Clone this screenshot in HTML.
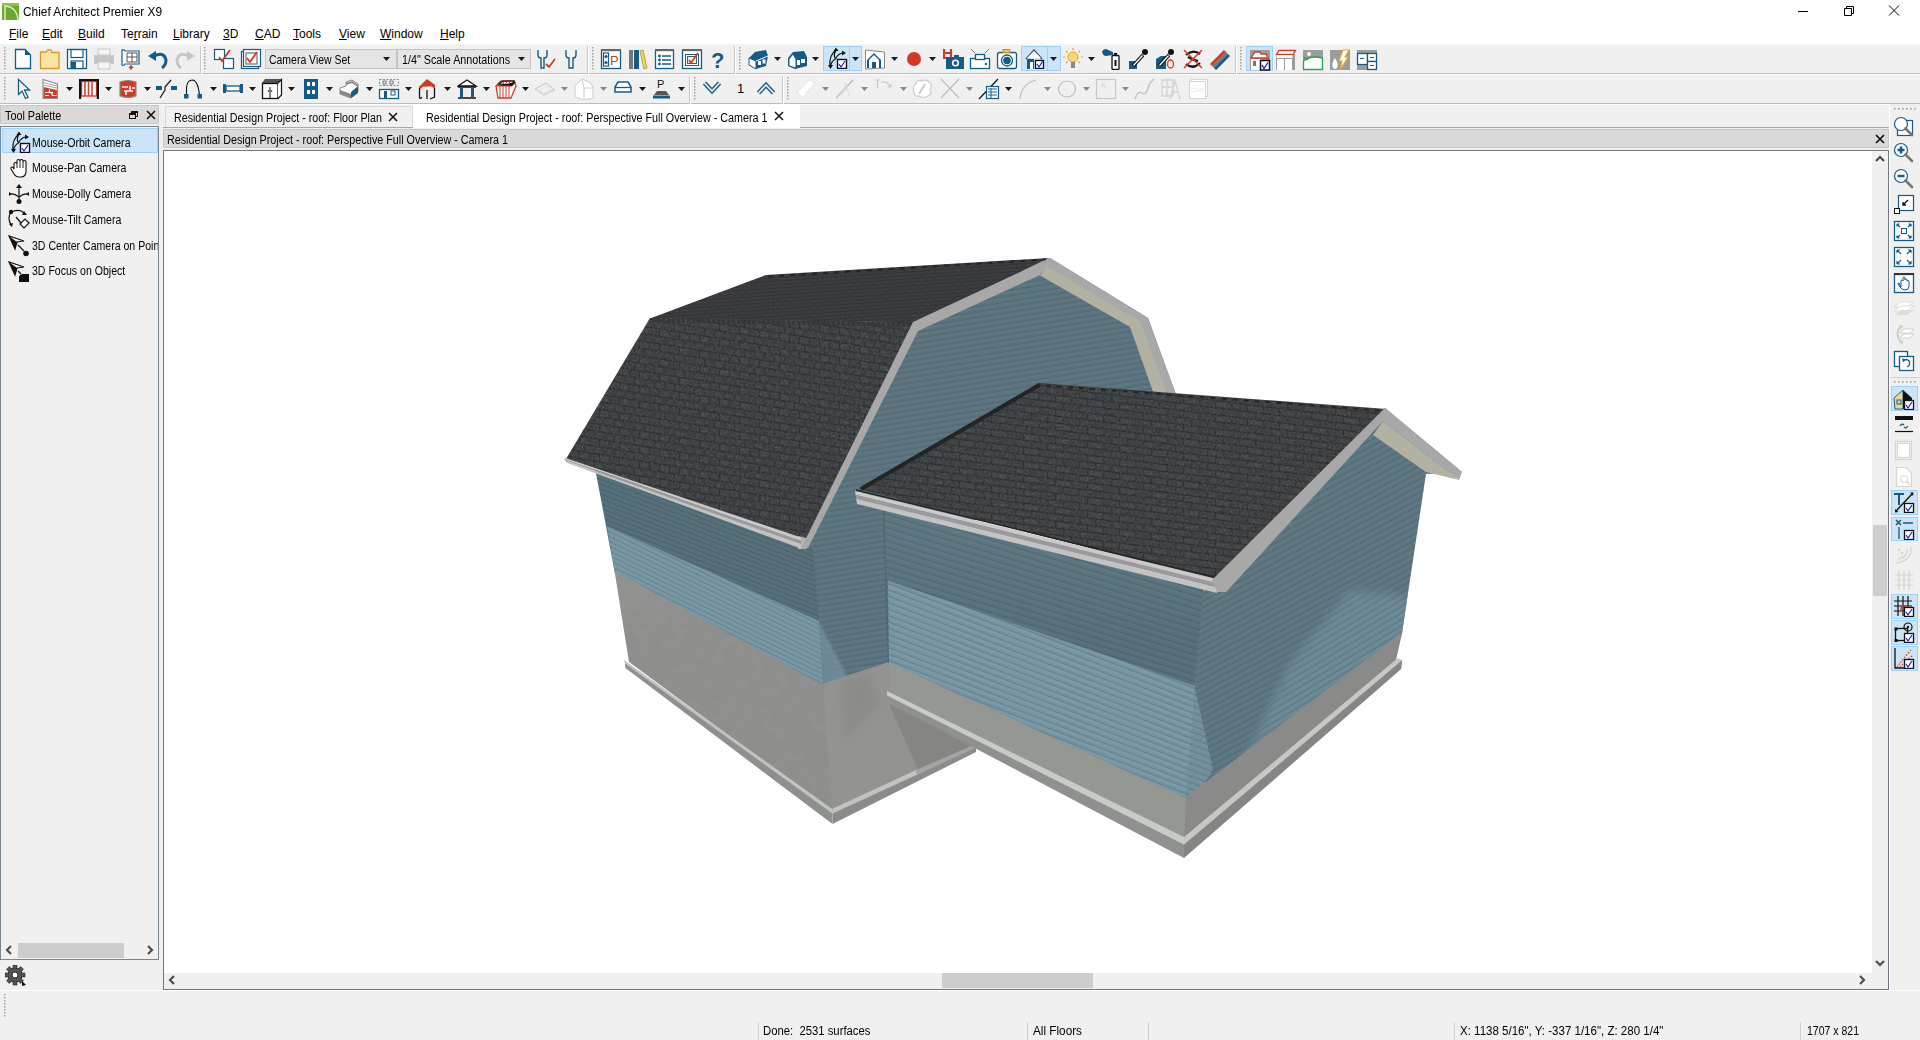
<!DOCTYPE html><html><head><meta charset="utf-8"><style>
html,body{margin:0;padding:0;width:1920px;height:1040px;overflow:hidden;background:#f0f0f0;font-family:"Liberation Sans", sans-serif;}
.r{position:absolute;display:block;}
.t{position:absolute;white-space:nowrap;line-height:1;font-family:"Liberation Sans", sans-serif;}
u{text-decoration:underline;text-underline-offset:1px;}
</style></head><body>

<div class="r" style="left:0px;top:0px;width:1920px;height:44px;background:#ffffff;"></div>
<svg class="r" style="left:2px;top:3px;" width="17" height="17" viewBox="0 0 17 17"><rect width="17" height="17" fill="#6aa82e"/><rect x="0" y="0" width="17" height="3" fill="#8cc44a"/><path d="M3 17 V3 Q15 4 16 17" fill="none" stroke="#d9efc0" stroke-width="1.5"/></svg>
<div class="t" style="left:23px;top:6px;font-size:12px;color:#000;transform:scaleX(0.9879);transform-origin:0 0;">Chief Architect Premier X9</div>
<svg class="r" style="left:1796px;top:4px" width="16" height="14"><path d="M2 7.5 H12" stroke="#000" stroke-width="1"/></svg>
<svg class="r" style="left:1842px;top:4px" width="16" height="14"><path d="M2.5 4.5 h7 v7 h-7 z M4.5 4.5 v-2 h7 v7 h-2" fill="none" stroke="#000" stroke-width="1"/></svg>
<svg class="r" style="left:1887px;top:4px" width="16" height="14"><path d="M2 1.5 L12 11.5 M12 1.5 L2 11.5" stroke="#000" stroke-width="1"/></svg>
<div class="t" style="left:9px;top:28.3px;font-size:12px;color:#000;"><u>F</u>ile</div>
<div class="t" style="left:42px;top:28.3px;font-size:12px;color:#000;"><u>E</u>dit</div>
<div class="t" style="left:78px;top:28.3px;font-size:12px;color:#000;"><u>B</u>uild</div>
<div class="t" style="left:121px;top:28.3px;font-size:12px;color:#000;">Te<u>r</u>rain</div>
<div class="t" style="left:173px;top:28.3px;font-size:12px;color:#000;"><u>L</u>ibrary</div>
<div class="t" style="left:223px;top:28.3px;font-size:12px;color:#000;"><u>3</u>D</div>
<div class="t" style="left:255px;top:28.3px;font-size:12px;color:#000;"><u>C</u>AD</div>
<div class="t" style="left:293px;top:28.3px;font-size:12px;color:#000;"><u>T</u>ools</div>
<div class="t" style="left:339px;top:28.3px;font-size:12px;color:#000;"><u>V</u>iew</div>
<div class="t" style="left:380px;top:28.3px;font-size:12px;color:#000;"><u>W</u>indow</div>
<div class="t" style="left:440px;top:28.3px;font-size:12px;color:#000;"><u>H</u>elp</div>
<div class="r" style="left:0px;top:44px;width:1920px;height:1px;background:#f7f7f7;"></div>
<div class="r" style="left:0px;top:73px;width:1920px;height:1px;background:#bdbdbd;"></div>
<div class="r" style="left:0px;top:74px;width:1920px;height:1px;background:#ffffff;"></div>
<div class="r" style="left:0px;top:103px;width:1920px;height:1px;background:#bdbdbd;"></div>
<div class="r" style="left:0px;top:104px;width:1920px;height:1px;background:#ffffff;"></div>
<svg class="r" style="left:4px;top:47px;" width="3" height="24" viewBox="0 0 3 24"><rect x="0" y="0" width="1.5" height="1.5" fill="#a0a0a0"/><rect x="0" y="3" width="1.5" height="1.5" fill="#a0a0a0"/><rect x="0" y="6" width="1.5" height="1.5" fill="#a0a0a0"/><rect x="0" y="9" width="1.5" height="1.5" fill="#a0a0a0"/><rect x="0" y="12" width="1.5" height="1.5" fill="#a0a0a0"/><rect x="0" y="15" width="1.5" height="1.5" fill="#a0a0a0"/><rect x="0" y="18" width="1.5" height="1.5" fill="#a0a0a0"/><rect x="0" y="21" width="1.5" height="1.5" fill="#a0a0a0"/></svg>
<svg class="r" style="left:14px;top:48px;" width="22" height="22" viewBox="0 0 22 22"><path d="M1.5 1.5 H11 L16.5 7 V20.5 H1.5 Z" fill="#fff" stroke="#145c88" stroke-width="1.3"/><path d="M11 1 L17 7 H11 Z" fill="#145c88"/></svg>
<svg class="r" style="left:39px;top:48px;" width="22" height="22" viewBox="0 0 22 22"><path d="M1.5 4 H7 L9 2 H12 L13 4.5 H20 V20.5 H1.5 Z" fill="#fbe3a2" stroke="#d39b2c" stroke-width="1.3"/></svg>
<svg class="r" style="left:66px;top:48px;" width="22" height="22" viewBox="0 0 22 22"><rect x="1.5" y="1.5" width="19" height="19" fill="#fff" stroke="#145c88" stroke-width="1.3"/><rect x="5" y="1.5" width="12" height="8" fill="none" stroke="#145c88" stroke-width="1.2"/><rect x="5" y="13" width="12" height="7.5" fill="#fff" stroke="#145c88" stroke-width="1.2"/><rect x="5" y="14" width="5" height="6.5" fill="#145c88"/></svg>
<svg class="r" style="left:93px;top:48px;" width="22" height="22" viewBox="0 0 22 22"><rect x="5" y="1" width="12" height="6" fill="#f4f4f4" stroke="#c6c6c6"/><rect x="1" y="7" width="20" height="9" fill="#c6c6c6"/><rect x="5" y="14" width="12" height="7" fill="#f4f4f4" stroke="#c6c6c6"/></svg>
<svg class="r" style="left:120px;top:48px;" width="22" height="22" viewBox="0 0 22 22"><path d="M2 2 Q4 1 5 3 H19 V16 H5 Q4 18 2 17 Z" fill="#fff" stroke="#145c88" stroke-width="1.2"/><path d="M7 5 H17 V14 H7 Z M7 9 H17 M12 5 V14" fill="none" stroke="#555" stroke-width="1"/><path d="M11 22 V18 M9 20 L11 18 L13 20" stroke="#d23a26" stroke-width="1.4" fill="none"/></svg>
<svg class="r" style="left:147px;top:48px;" width="22" height="22" viewBox="0 0 22 22"><path d="M7 8 Q17 3 19 12 Q19 17 15 20" fill="none" stroke="#145c88" stroke-width="3"/><path d="M1 8 L9 3 L9 13 Z" fill="#145c88"/></svg>
<svg class="r" style="left:174px;top:48px;" width="22" height="22" viewBox="0 0 22 22"><path d="M15 8 Q5 3 3 12 Q3 17 7 20" fill="none" stroke="#c6c6c6" stroke-width="3"/><path d="M21 8 L13 3 L13 13 Z" fill="#c6c6c6"/></svg>
<div class="r" style="left:200px;top:46px;width:1px;height:28px;background:#c8c8c8;"></div>
<div class="r" style="left:201px;top:46px;width:1px;height:28px;background:#ffffff;"></div>
<svg class="r" style="left:204px;top:47px;" width="3" height="24" viewBox="0 0 3 24"><rect x="0" y="0" width="1.5" height="1.5" fill="#a0a0a0"/><rect x="0" y="3" width="1.5" height="1.5" fill="#a0a0a0"/><rect x="0" y="6" width="1.5" height="1.5" fill="#a0a0a0"/><rect x="0" y="9" width="1.5" height="1.5" fill="#a0a0a0"/><rect x="0" y="12" width="1.5" height="1.5" fill="#a0a0a0"/><rect x="0" y="15" width="1.5" height="1.5" fill="#a0a0a0"/><rect x="0" y="18" width="1.5" height="1.5" fill="#a0a0a0"/><rect x="0" y="21" width="1.5" height="1.5" fill="#a0a0a0"/></svg>
<svg class="r" style="left:213px;top:48px;" width="22" height="22" viewBox="0 0 22 22"><rect x="1.5" y="1.5" width="10" height="10" fill="#fff" stroke="#145c88" stroke-width="1.2"/><rect x="10.5" y="10.5" width="10" height="10" fill="#fff" stroke="#145c88" stroke-width="1.2"/><path d="M6 9 L9 13 L17 2" fill="none" stroke="#d23a26" stroke-width="1.8"/></svg>
<svg class="r" style="left:240px;top:48px;" width="22" height="22" viewBox="0 0 22 22"><rect x="1.5" y="3.5" width="17" height="17" fill="#fff" stroke="#145c88" stroke-width="1.2"/><rect x="3.5" y="1.5" width="17" height="17" fill="#fff" stroke="#145c88" stroke-width="1.2"/><rect x="6" y="5" width="11" height="11" fill="#fff" stroke="#555"/><path d="M7 10 L10 14 L17 4" fill="none" stroke="#d23a26" stroke-width="1.8"/></svg>
<div class="r" style="left:265px;top:49px;width:132px;height:20px;background:#e5e5e5;box-sizing:border-box;border:1px solid #c4c4c4;"></div>
<div class="t" style="left:268.5px;top:54px;font-size:12px;color:#000;transform:scaleX(0.8718);transform-origin:0 0;">Camera View Set</div>
<svg class="r" style="left:383px;top:57px;" width="8" height="5" viewBox="0 0 8 5"><path d="M0 0 H7 L3.5 4 Z" fill="#1a1a1a"/></svg>
<div class="r" style="left:397px;top:49px;width:134px;height:20px;background:#e5e5e5;box-sizing:border-box;border:1px solid #c4c4c4;"></div>
<div class="t" style="left:401.5px;top:54px;font-size:12px;color:#000;transform:scaleX(0.8977);transform-origin:0 0;">1/4" Scale Annotations</div>
<svg class="r" style="left:518px;top:57px;" width="8" height="5" viewBox="0 0 8 5"><path d="M0 0 H7 L3.5 4 Z" fill="#1a1a1a"/></svg>
<svg class="r" style="left:534px;top:48px;" width="22" height="22" viewBox="0 0 22 22"><path d="M4 2 V7 Q4 10 7 10 V20 H10 V10 Q13 10 13 7 V2" fill="none" stroke="#145c88" stroke-width="1.4"/><path d="M12 16 L15 19 L21 11" fill="none" stroke="#d23a26" stroke-width="1.8"/></svg>
<svg class="r" style="left:563px;top:48px;" width="22" height="22" viewBox="0 0 22 22"><path d="M3 2 V7 Q3 10 6 10 V20 H10 V10 Q13 10 13 7 V2" fill="none" stroke="#145c88" stroke-width="1.4"/></svg>
<div class="r" style="left:587px;top:46px;width:1px;height:28px;background:#c8c8c8;"></div>
<div class="r" style="left:588px;top:46px;width:1px;height:28px;background:#ffffff;"></div>
<svg class="r" style="left:592px;top:47px;" width="3" height="24" viewBox="0 0 3 24"><rect x="0" y="0" width="1.5" height="1.5" fill="#a0a0a0"/><rect x="0" y="3" width="1.5" height="1.5" fill="#a0a0a0"/><rect x="0" y="6" width="1.5" height="1.5" fill="#a0a0a0"/><rect x="0" y="9" width="1.5" height="1.5" fill="#a0a0a0"/><rect x="0" y="12" width="1.5" height="1.5" fill="#a0a0a0"/><rect x="0" y="15" width="1.5" height="1.5" fill="#a0a0a0"/><rect x="0" y="18" width="1.5" height="1.5" fill="#a0a0a0"/><rect x="0" y="21" width="1.5" height="1.5" fill="#a0a0a0"/></svg>
<svg class="r" style="left:600px;top:48px;" width="22" height="22" viewBox="0 0 22 22"><rect x="1.5" y="2.5" width="19" height="18" fill="#fff" stroke="#145c88" stroke-width="1.3"/><rect x="1" y="1" width="20" height="2" fill="#666"/><rect x="3.5" y="5" width="5" height="13" fill="none" stroke="#145c88" stroke-width="1.2"/><circle cx="6" cy="8.5" r="1.6" fill="#145c88"/><circle cx="6" cy="14.5" r="1.6" fill="#145c88"/><text x="10" y="17" font-size="13" font-family="Liberation Sans" fill="#d23a26">P</text></svg>
<svg class="r" style="left:627px;top:48px;" width="22" height="22" viewBox="0 0 22 22"><rect x="2" y="2" width="4" height="19" fill="#777"/><rect x="7" y="2" width="5" height="19" fill="#145c88"/><path d="M13 3 L16 2 L20 20 L17 21 Z" fill="#f0d070" stroke="#c8a030"/></svg>
<svg class="r" style="left:654px;top:48px;" width="22" height="22" viewBox="0 0 22 22"><rect x="1.5" y="2.5" width="18" height="18" fill="#fff" stroke="#145c88" stroke-width="1.3"/><rect x="1" y="1" width="19" height="2" fill="#666"/><circle cx="5.5" cy="8" r="1.4" fill="#145c88"/><circle cx="5.5" cy="12" r="1.4" fill="#145c88"/><circle cx="5.5" cy="16" r="1.4" fill="#145c88"/><path d="M8 8 H17 M8 12 H17 M8 16 H17" stroke="#145c88" stroke-width="1.3"/></svg>
<svg class="r" style="left:681px;top:48px;" width="22" height="22" viewBox="0 0 22 22"><rect x="1.5" y="2.5" width="19" height="18" fill="#fff" stroke="#145c88" stroke-width="1.3"/><rect x="1" y="1" width="20" height="2" fill="#666"/><rect x="4.5" y="6.5" width="13" height="11" fill="none" stroke="#145c88"/><rect x="6.5" y="8.5" width="9" height="7" fill="#eee" stroke="#555"/><path d="M8 12 L10 15 L17 5" fill="none" stroke="#d23a26" stroke-width="1.7"/></svg>
<svg class="r" style="left:709px;top:48px;" width="22" height="22" viewBox="0 0 22 22"><text x="2" y="20" font-size="22" font-weight="bold" font-family="Liberation Sans" fill="#145c88">?</text></svg>
<div class="r" style="left:734px;top:46px;width:1px;height:28px;background:#c8c8c8;"></div>
<div class="r" style="left:735px;top:46px;width:1px;height:28px;background:#ffffff;"></div>
<svg class="r" style="left:739px;top:47px;" width="3" height="24" viewBox="0 0 3 24"><rect x="0" y="0" width="1.5" height="1.5" fill="#a0a0a0"/><rect x="0" y="3" width="1.5" height="1.5" fill="#a0a0a0"/><rect x="0" y="6" width="1.5" height="1.5" fill="#a0a0a0"/><rect x="0" y="9" width="1.5" height="1.5" fill="#a0a0a0"/><rect x="0" y="12" width="1.5" height="1.5" fill="#a0a0a0"/><rect x="0" y="15" width="1.5" height="1.5" fill="#a0a0a0"/><rect x="0" y="18" width="1.5" height="1.5" fill="#a0a0a0"/><rect x="0" y="21" width="1.5" height="1.5" fill="#a0a0a0"/></svg>
<svg class="r" style="left:747px;top:48px;" width="22" height="22" viewBox="0 0 22 22"><path d="M2 10 L8 4 L19 2 L21 8 L19 18 L9 21 L2 17 Z" fill="#145c88"/><path d="M2 10 L9 13 L9 21 L2 17 Z" fill="#fff" stroke="#145c88"/><path d="M9 13 L21 8" stroke="#fff"/><rect x="11" y="13" width="3" height="4" fill="#fff"/><rect x="15.5" y="11.5" width="3" height="4" fill="#fff"/></svg>
<svg class="r" style="left:774px;top:57px;" width="8" height="5" viewBox="0 0 8 5"><path d="M0 0 H7 L3.5 4 Z" fill="#1a1a1a"/></svg>
<svg class="r" style="left:786px;top:48px;" width="22" height="22" viewBox="0 0 22 22"><path d="M2 10 L7 4 L18 3 L21 9 V18 L9 21 L2 18 Z" fill="#145c88"/><path d="M3 11 L7 6 L10 11 V20 L3 18 Z" fill="#fff" stroke="#145c88"/><rect x="11" y="12" width="3" height="5" fill="#fff"/><rect x="15" y="11" width="4" height="4" fill="#fff"/></svg>
<svg class="r" style="left:812px;top:57px;" width="8" height="5" viewBox="0 0 8 5"><path d="M0 0 H7 L3.5 4 Z" fill="#1a1a1a"/></svg>
<div class="r" style="left:823px;top:46px;width:39px;height:25px;background:#cce4f7;box-sizing:border-box;border:1px solid #99d1ff;"></div>
<div class="r" style="left:849px;top:47px;width:1px;height:23px;background:#99d1ff;"></div>
<svg class="r" style="left:826px;top:47px;" width="22" height="22" viewBox="0 0 22 22"><path d="M10 3 Q3 8 4 19 M9.5 12 Q7 8 10 3.5 M9.5 12 Q12 6.5 17 6 M9.5 12 Q5.5 14 4.5 19" fill="none" stroke="#111" stroke-width="1.2"/><path d="M7.5 4 L10 0.5 L12.5 4 Z M16 3.5 L20 6 L16 8.5 Z M2 18 L4.5 22 L7 18 Z" fill="#111"/><rect x="11.5" y="12.5" width="9" height="9" fill="#fff" stroke="#111" stroke-width="1.4"/><path d="M13 17 L15 20 L19 14" fill="none" stroke="#1a1acc" stroke-width="1.2"/></svg>
<svg class="r" style="left:852px;top:57px;" width="8" height="5" viewBox="0 0 8 5"><path d="M0 0 H7 L3.5 4 Z" fill="#1a1a1a"/></svg>
<svg class="r" style="left:864px;top:48px;" width="22" height="22" viewBox="0 0 22 22"><path d="M1.5 2 L20.5 4 V20 L1.5 21 Z" fill="#fff" stroke="#888"/><path d="M3 12 L10 5 L17 12 V20 H3 Z" fill="#145c88"/><path d="M5 12 L10 7 L15 12 V20 H5 Z" fill="#fff"/><rect x="8" y="14" width="4" height="6" fill="#145c88"/></svg>
<svg class="r" style="left:891px;top:57px;" width="8" height="5" viewBox="0 0 8 5"><path d="M0 0 H7 L3.5 4 Z" fill="#1a1a1a"/></svg>
<svg class="r" style="left:903px;top:48px;" width="22" height="22" viewBox="0 0 22 22"><circle cx="11" cy="11" r="7" fill="#d23a26"/></svg>
<svg class="r" style="left:929px;top:57px;" width="8" height="5" viewBox="0 0 8 5"><path d="M0 0 H7 L3.5 4 Z" fill="#1a1a1a"/></svg>
<svg class="r" style="left:943px;top:48px;" width="22" height="22" viewBox="0 0 22 22"><path d="M1 1 V10 H8 V1 M1 5 H8" fill="none" stroke="#d23a26" stroke-width="2.2"/><rect x="3" y="9" width="18" height="12" fill="#145c88"/><rect x="11" y="7" width="5" height="3" fill="#145c88"/><circle cx="12.5" cy="15" r="3.6" fill="#fff"/><circle cx="12.5" cy="15" r="2" fill="#145c88"/></svg>
<svg class="r" style="left:969px;top:48px;" width="22" height="22" viewBox="0 0 22 22"><path d="M2 1 L6 5 M20 1 L16 5" stroke="#888"/><rect x="1.5" y="10.5" width="19" height="10" fill="#fff" stroke="#145c88" stroke-width="1.3"/><rect x="6.5" y="6.5" width="9" height="5" fill="#fff" stroke="#145c88" stroke-width="1.3"/><circle cx="17" cy="16" r="1.2" fill="#145c88"/></svg>
<svg class="r" style="left:996px;top:48px;" width="22" height="22" viewBox="0 0 22 22"><rect x="1.5" y="4.5" width="19" height="16" rx="2" fill="#fff" stroke="#145c88" stroke-width="1.3"/><rect x="7" y="1.5" width="7" height="3" fill="#f0c060" stroke="#d09020"/><circle cx="11" cy="12.5" r="5.5" fill="none" stroke="#145c88" stroke-width="1.3"/><circle cx="11" cy="12.5" r="3.8" fill="#145c88"/></svg>
<div class="r" style="left:1021px;top:46px;width:40px;height:25px;background:#cce4f7;box-sizing:border-box;border:1px solid #99d1ff;"></div>
<div class="r" style="left:1047px;top:47px;width:1px;height:23px;background:#99d1ff;"></div>
<svg class="r" style="left:1024px;top:47px;" width="22" height="22" viewBox="0 0 22 22"><path d="M2 12 L10 3 L18 12" fill="none" stroke="#444" stroke-width="1.3"/><path d="M3 11 L10 4 L17 11" fill="#fff"/><rect x="3" y="12" width="7" height="10" fill="#145c88"/><rect x="6" y="15" width="3" height="7" fill="#fff"/><rect x="11.5" y="13.5" width="8" height="8" fill="#fff" stroke="#111" stroke-width="1.3"/><path d="M13 17 L15 20 L18.5 14.5" fill="none" stroke="#1a1acc" stroke-width="1.2"/></svg>
<svg class="r" style="left:1050px;top:57px;" width="8" height="5" viewBox="0 0 8 5"><path d="M0 0 H7 L3.5 4 Z" fill="#1a1a1a"/></svg>
<svg class="r" style="left:1062px;top:48px;" width="22" height="22" viewBox="0 0 22 22"><circle cx="11" cy="9" r="5" fill="#f6d77a" stroke="#e0a030"/><rect x="9" y="14" width="4" height="6" fill="#888"/><path d="M11 0 V2 M3 9 H1 M21 9 H19 M4 3 L5.5 4.5 M18 3 L16.5 4.5 M4 15 L5.5 13.5 M18 15 L16.5 13.5" stroke="#e0a030" stroke-width="1.2"/></svg>
<svg class="r" style="left:1088px;top:57px;" width="8" height="5" viewBox="0 0 8 5"><path d="M0 0 H7 L3.5 4 Z" fill="#1a1a1a"/></svg>
<svg class="r" style="left:1101px;top:48px;" width="22" height="22" viewBox="0 0 22 22"><path d="M1 4 Q2 1 5 1 L12 4 V7 L5 8 Q2 8 1 4 Z" fill="#145c88"/><rect x="11" y="7.5" width="7" height="14" rx="1" fill="#fff" stroke="#111" stroke-width="1.3"/><rect x="13" y="5" width="3" height="3" fill="#111"/><rect x="13.5" y="12" width="2" height="6" fill="#111"/></svg>
<svg class="r" style="left:1128px;top:48px;" width="22" height="22" viewBox="0 0 22 22"><rect x="1" y="13" width="8" height="8" fill="#145c88"/><path d="M5 18 L15 7" stroke="#111" stroke-width="3.5"/><path d="M5.5 17.5 L14.5 7.5" stroke="#fff" stroke-width="1.3"/><circle cx="17" cy="4" r="3" fill="#111"/></svg>
<svg class="r" style="left:1155px;top:48px;" width="22" height="22" viewBox="0 0 22 22"><path d="M1 11 L6 8 H11 V21 H1 Z" fill="#145c88"/><path d="M4 18 L14 7" stroke="#111" stroke-width="3.5"/><path d="M4.5 17.5 L13.5 7.5" stroke="#fff" stroke-width="1.3"/><circle cx="16" cy="4" r="3" fill="#111"/><ellipse cx="15.5" cy="16" rx="3" ry="4" fill="none" stroke="#d23a26" stroke-width="1.3"/></svg>
<svg class="r" style="left:1182px;top:48px;" width="22" height="22" viewBox="0 0 22 22"><path d="M4 7 Q11 1 18 6 M4 16 Q11 22 18 15 M6 9 Q11 12 16 13" fill="none" stroke="#111" stroke-width="2.2"/><path d="M2 2 L20 20 M20 2 L2 20" stroke="#d23a26" stroke-width="1.5"/></svg>
<svg class="r" style="left:1209px;top:48px;" width="22" height="22" viewBox="0 0 22 22"><path d="M2 17 L16 3" stroke="#d23a26" stroke-width="3"/><path d="M4 19 L18 5" stroke="#777" stroke-width="3"/><path d="M6 21 L20 7" stroke="#145c88" stroke-width="3"/></svg>
<div class="r" style="left:1235px;top:46px;width:1px;height:28px;background:#c8c8c8;"></div>
<div class="r" style="left:1236px;top:46px;width:1px;height:28px;background:#ffffff;"></div>
<svg class="r" style="left:1240px;top:47px;" width="3" height="24" viewBox="0 0 3 24"><rect x="0" y="0" width="1.5" height="1.5" fill="#a0a0a0"/><rect x="0" y="3" width="1.5" height="1.5" fill="#a0a0a0"/><rect x="0" y="6" width="1.5" height="1.5" fill="#a0a0a0"/><rect x="0" y="9" width="1.5" height="1.5" fill="#a0a0a0"/><rect x="0" y="12" width="1.5" height="1.5" fill="#a0a0a0"/><rect x="0" y="15" width="1.5" height="1.5" fill="#a0a0a0"/><rect x="0" y="18" width="1.5" height="1.5" fill="#a0a0a0"/><rect x="0" y="21" width="1.5" height="1.5" fill="#a0a0a0"/></svg>
<div class="r" style="left:1246px;top:46px;width:27px;height:25px;background:#cce4f7;box-sizing:border-box;border:1px solid #99d1ff;"></div>
<svg class="r" style="left:1249px;top:49px;" width="22" height="22" viewBox="0 0 22 22"><rect x="1" y="1" width="20" height="20" fill="#9c9c9c"/><path d="M2 9 L6 3 H11 L12 5 H17 L19 9 Z" fill="#fff" stroke="#d23a26" stroke-width="1.3"/><rect x="2" y="10" width="10" height="11" fill="#fff"/><rect x="4" y="12" width="3" height="5" fill="#777"/><rect x="11.5" y="11.5" width="9" height="9.5" fill="#fff" stroke="#111" stroke-width="1.5"/><path d="M13 16 L15 19.5 L19 13.5" fill="none" stroke="#1a1acc" stroke-width="1.3"/></svg>
<svg class="r" style="left:1275px;top:49px;" width="22" height="22" viewBox="0 0 22 22"><rect x="1" y="5" width="19" height="16" fill="#9c9c9c"/><path d="M1.5 5.5 L4 1.5 H20.5 L18 5.5 Z" fill="#fff" stroke="#d23a26" stroke-width="1.3"/><rect x="1.5" y="6" width="16" height="3" fill="#fff"/><rect x="2" y="10" width="7" height="11" fill="#fff"/><rect x="10" y="10" width="7" height="11" fill="#fff"/></svg>
<svg class="r" style="left:1302px;top:49px;" width="22" height="22" viewBox="0 0 22 22"><rect x="1" y="1" width="20" height="20" fill="#9c9c9c"/><circle cx="7" cy="5" r="2" fill="#fff"/><path d="M1.5 12 Q9 6 20.5 9 V20.5 H1.5 Z" fill="#fff" stroke="#2da04a" stroke-width="1.3"/><path d="M1.5 8 L6 11" stroke="#2da04a" stroke-width="1.3"/></svg>
<svg class="r" style="left:1329px;top:49px;" width="22" height="22" viewBox="0 0 22 22"><rect x="1" y="1" width="20" height="20" fill="#9c9c9c"/><path d="M6 9 Q2 15 4 19 Q6 21 8 19 Q10 15 6 9 Z" fill="#fff"/><path d="M14 1 H20 L16 8 H19 L11 21 L13 12 H10 Z" fill="#fff" stroke="#f0a820" stroke-width="1.2"/></svg>
<svg class="r" style="left:1356px;top:49px;" width="22" height="22" viewBox="0 0 22 22"><rect x="1" y="1" width="20" height="20" fill="#9c9c9c"/><rect x="1.5" y="4.5" width="10" height="11" fill="#fff" stroke="#145c88" stroke-width="1.3"/><rect x="11.5" y="4.5" width="9" height="8" fill="#fff" stroke="#145c88" stroke-width="1.3"/><rect x="11.5" y="12.5" width="9" height="8" fill="#fff" stroke="#145c88" stroke-width="1.3"/><path d="M4 9.5 H8 M14 8.5 H18 M14 16.5 H18" stroke="#145c88" stroke-width="1.2"/></svg>
<svg class="r" style="left:4px;top:77px;" width="3" height="24" viewBox="0 0 3 24"><rect x="0" y="0" width="1.5" height="1.5" fill="#a0a0a0"/><rect x="0" y="3" width="1.5" height="1.5" fill="#a0a0a0"/><rect x="0" y="6" width="1.5" height="1.5" fill="#a0a0a0"/><rect x="0" y="9" width="1.5" height="1.5" fill="#a0a0a0"/><rect x="0" y="12" width="1.5" height="1.5" fill="#a0a0a0"/><rect x="0" y="15" width="1.5" height="1.5" fill="#a0a0a0"/><rect x="0" y="18" width="1.5" height="1.5" fill="#a0a0a0"/><rect x="0" y="21" width="1.5" height="1.5" fill="#a0a0a0"/></svg>
<svg class="r" style="left:16px;top:78px;" width="22" height="22" viewBox="0 0 22 22"><path d="M2.5 1.5 L2.5 16.5 L6 13 L9.5 20.5 L12 19.5 L8.5 12 L13.5 12 Z" fill="#fff" stroke="#145c88" stroke-width="1.3" stroke-linejoin="miter"/></svg>
<svg class="r" style="left:41px;top:78px;" width="22" height="22" viewBox="0 0 22 22"><path d="M2 1.5 L16.5 6 V20.5 H2 Z" fill="#fff" stroke="#8a8a8a" stroke-width="1.1"/><path d="M2 4.5 L16 8 M2 7 L16 10" stroke="#9a9a9a" stroke-width=".9"/><path d="M2.6 9 L15.9 12 V19.9 H2.6 Z" fill="#d23a26"/><path d="M4 14.5 H12 M8.5 11.5 V14.5 M4 17.5 H8 M11 14.5 V17.5 M11 17.5 H15.5" stroke="#fff" stroke-width="1.2"/></svg>
<svg class="r" style="left:66px;top:87px;" width="8" height="5" viewBox="0 0 8 5"><path d="M0 0 H7 L3.5 4 Z" fill="#1a1a1a"/></svg>
<svg class="r" style="left:78px;top:78px;" width="22" height="22" viewBox="0 0 22 22"><rect x="3.5" y="3.5" width="15" height="14.5" fill="#fff" stroke="#d23a26" stroke-width="1.3"/><path d="M7 3.5 V18 M10.5 3.5 V18 M14 3.5 V18" stroke="#d23a26" stroke-width="1.5"/><rect x="1" y="1" width="2.2" height="20" fill="#111"/><rect x="18.8" y="1" width="2.2" height="20" fill="#111"/><rect x="1" y="1" width="20" height="2" fill="#111"/></svg>
<svg class="r" style="left:105px;top:87px;" width="8" height="5" viewBox="0 0 8 5"><path d="M0 0 H7 L3.5 4 Z" fill="#1a1a1a"/></svg>
<svg class="r" style="left:118px;top:78px;" width="22" height="22" viewBox="0 0 22 22"><path d="M2 4 Q10 1 18 4 V18 Q10 21 2 18 Z" fill="#d23a26" stroke="#888" stroke-width="1.2"/><path d="M4 9 H10 M12 8 V13 M6 13 H15 M8 13 V17 M14 10 H17" stroke="#fff" stroke-width="1.5"/></svg>
<svg class="r" style="left:144px;top:87px;" width="8" height="5" viewBox="0 0 8 5"><path d="M0 0 H7 L3.5 4 Z" fill="#1a1a1a"/></svg>
<svg class="r" style="left:156px;top:78px;" width="22" height="22" viewBox="0 0 22 22"><rect x="0" y="8" width="6" height="4" fill="#145c88"/><rect x="15" y="8" width="6" height="4" fill="#145c88"/><path d="M4 20 L9 12 L9 9 L15 2" stroke="#222" stroke-width="1.3" fill="none"/></svg>
<svg class="r" style="left:183px;top:78px;" width="22" height="22" viewBox="0 0 22 22"><path d="M3.5 17 V10 Q4 2 9.5 2 Q15 2.5 16.5 17" fill="none" stroke="#111" stroke-width="1.1"/><rect x="1" y="16" width="4.5" height="4.5" fill="#145c88"/><rect x="14.5" y="16" width="4.5" height="4.5" fill="#145c88"/></svg>
<svg class="r" style="left:210px;top:87px;" width="8" height="5" viewBox="0 0 8 5"><path d="M0 0 H7 L3.5 4 Z" fill="#1a1a1a"/></svg>
<svg class="r" style="left:222px;top:78px;" width="22" height="22" viewBox="0 0 22 22"><rect x="1" y="6" width="3" height="9" fill="#145c88"/><rect x="18" y="6" width="3" height="9" fill="#145c88"/><rect x="4" y="8" width="14" height="5" fill="#fff" stroke="#145c88" stroke-width="1.3"/></svg>
<svg class="r" style="left:249px;top:87px;" width="8" height="5" viewBox="0 0 8 5"><path d="M0 0 H7 L3.5 4 Z" fill="#1a1a1a"/></svg>
<svg class="r" style="left:261px;top:78px;" width="22" height="22" viewBox="0 0 22 22"><path d="M1 5 L4 1 H20 L17 5 Z" fill="#555"/><rect x="1.5" y="5.5" width="15.5" height="15" fill="#fff" stroke="#111" stroke-width="1.3"/><path d="M17 5 L20.5 1.5 V17 L17 20.5" fill="#fff" stroke="#111" stroke-width="1.2"/><path d="M9 9 V20" stroke="#111"/><circle cx="7.5" cy="13" r=".8" fill="#111"/><circle cx="10.5" cy="13" r=".8" fill="#111"/></svg>
<svg class="r" style="left:288px;top:87px;" width="8" height="5" viewBox="0 0 8 5"><path d="M0 0 H7 L3.5 4 Z" fill="#1a1a1a"/></svg>
<svg class="r" style="left:303px;top:78px;" width="22" height="22" viewBox="0 0 22 22"><rect x="1" y="1" width="14" height="20" fill="#145c88"/><rect x="4" y="4" width="3" height="4" fill="#fff"/><rect x="9" y="4" width="3" height="4" fill="#fff"/><rect x="4" y="12" width="3" height="4" fill="#fff"/><rect x="9" y="12" width="3" height="4" fill="#fff"/></svg>
<svg class="r" style="left:326px;top:87px;" width="8" height="5" viewBox="0 0 8 5"><path d="M0 0 H7 L3.5 4 Z" fill="#1a1a1a"/></svg>
<svg class="r" style="left:339px;top:78px;" width="22" height="22" viewBox="0 0 22 22"><path d="M1 10 L7 8 L7 4 L13 2 L19 6 V14 L12 20 L1 16 Z" fill="#fff" stroke="#888"/><path d="M12 14 L19 8 V15 L12 20 Z" fill="#145c88"/><path d="M1 12 L12 16 V20 L1 16 Z" fill="#888"/><path d="M7 6 L13 4 L19 8" stroke="#888" fill="none" stroke-width="2"/></svg>
<svg class="r" style="left:366px;top:87px;" width="8" height="5" viewBox="0 0 8 5"><path d="M0 0 H7 L3.5 4 Z" fill="#1a1a1a"/></svg>
<svg class="r" style="left:378px;top:78px;" width="22" height="22" viewBox="0 0 22 22"><rect x="1.5" y="1.5" width="19" height="6" fill="none" stroke="#888" stroke-dasharray="2 1.5"/><rect x="5" y="3" width="3" height="3" fill="none" stroke="#777"/><rect x="12" y="3" width="3" height="3" fill="none" stroke="#777"/><rect x="1.5" y="11.5" width="19" height="9" fill="#fff" stroke="#145c88" stroke-width="1.3"/><rect x="6" y="13" width="3" height="7.5" fill="#145c88"/><rect x="13" y="13" width="4" height="4" fill="none" stroke="#145c88"/></svg>
<svg class="r" style="left:405px;top:87px;" width="8" height="5" viewBox="0 0 8 5"><path d="M0 0 H7 L3.5 4 Z" fill="#1a1a1a"/></svg>
<svg class="r" style="left:417px;top:78px;" width="22" height="22" viewBox="0 0 22 22"><path d="M2 9 L10 1 L18 7 L18 11 L10 5 L2 12 Z" fill="#d23a26"/><path d="M2 9 L10 2 L18 8" fill="#d23a26"/><path d="M2.5 10 V20 Q4 21 5 19 M10 21 V12 M17.5 10 V19 L13 21" fill="none" stroke="#111" stroke-width="1.3"/></svg>
<svg class="r" style="left:444px;top:87px;" width="8" height="5" viewBox="0 0 8 5"><path d="M0 0 H7 L3.5 4 Z" fill="#1a1a1a"/></svg>
<svg class="r" style="left:457px;top:78px;" width="22" height="22" viewBox="0 0 22 22"><path d="M1 8 L10 2 L19 8 Z" fill="#fff" stroke="#111" stroke-width="1.3"/><rect x="3" y="10" width="3" height="9" fill="#145c88"/><rect x="14" y="10" width="3" height="9" fill="#145c88"/><path d="M1 9 H19 M1 20 H19" stroke="#111" stroke-width="1.3"/></svg>
<svg class="r" style="left:483px;top:87px;" width="8" height="5" viewBox="0 0 8 5"><path d="M0 0 H7 L3.5 4 Z" fill="#1a1a1a"/></svg>
<svg class="r" style="left:495px;top:78px;" width="22" height="22" viewBox="0 0 22 22"><path d="M1 8 L6 3 H19 L21 8 L16 20 H3 L1 8 Z" fill="#fff" stroke="#d23a26" stroke-width="1.3"/><path d="M5 8 V20 M8 8 V20 M11 8 V20 M14 8 V20 M6 3 L4 8 M9 3 L7 8 M12 3 L10 8 M15 3 L13 8 M1 8 H17 L21 4" stroke="#d23a26" stroke-width="1"/><path d="M4 6 L8 3 H19 L17 7 Z" fill="none" stroke="#111" stroke-width="1.2"/></svg>
<svg class="r" style="left:522px;top:87px;" width="8" height="5" viewBox="0 0 8 5"><path d="M0 0 H7 L3.5 4 Z" fill="#1a1a1a"/></svg>
<svg class="r" style="left:534px;top:78px;" width="22" height="22" viewBox="0 0 22 22"><path d="M1 11 L12 5 L21 12 L10 17 Z" fill="#e6e6e6" stroke="#c8c8c8"/><path d="M4 11 L13 7 M7 13 L15 9 M9 14 L17 10" stroke="#fff"/></svg>
<svg class="r" style="left:561px;top:87px;" width="8" height="5" viewBox="0 0 8 5"><path d="M0 0 H7 L3.5 4 Z" fill="#888"/></svg>
<svg class="r" style="left:573px;top:78px;" width="22" height="22" viewBox="0 0 22 22"><path d="M2 8 L9 1 L18 5 L20 10 V20 L11 22 L2 19 Z" fill="#fff" stroke="#ccc"/><path d="M9 1 L11 10 L20 10 M11 10 V22" stroke="#ccc" fill="none"/></svg>
<svg class="r" style="left:600px;top:87px;" width="8" height="5" viewBox="0 0 8 5"><path d="M0 0 H7 L3.5 4 Z" fill="#888"/></svg>
<svg class="r" style="left:612px;top:78px;" width="22" height="22" viewBox="0 0 22 22"><path d="M3 9 L6 4 H16 L19 9 V14 H3 Z" fill="#fff" stroke="#145c88" stroke-width="1.5"/><path d="M3 9.5 H19" stroke="#145c88" stroke-width="1.3"/></svg>
<svg class="r" style="left:639px;top:87px;" width="8" height="5" viewBox="0 0 8 5"><path d="M0 0 H7 L3.5 4 Z" fill="#1a1a1a"/></svg>
<svg class="r" style="left:651px;top:78px;" width="22" height="22" viewBox="0 0 22 22"><text x="6" y="10" font-size="11" font-family="Liberation Sans" fill="#111">P</text><path d="M3 17 L6 13 H15 L18 17 Z" fill="#555"/><rect x="2" y="17.5" width="17" height="3" fill="#145c88"/></svg>
<svg class="r" style="left:678px;top:87px;" width="8" height="5" viewBox="0 0 8 5"><path d="M0 0 H7 L3.5 4 Z" fill="#1a1a1a"/></svg>
<div class="r" style="left:689px;top:76px;width:1px;height:28px;background:#c8c8c8;"></div>
<div class="r" style="left:690px;top:76px;width:1px;height:28px;background:#ffffff;"></div>
<svg class="r" style="left:694px;top:77px;" width="3" height="24" viewBox="0 0 3 24"><rect x="0" y="0" width="1.5" height="1.5" fill="#a0a0a0"/><rect x="0" y="3" width="1.5" height="1.5" fill="#a0a0a0"/><rect x="0" y="6" width="1.5" height="1.5" fill="#a0a0a0"/><rect x="0" y="9" width="1.5" height="1.5" fill="#a0a0a0"/><rect x="0" y="12" width="1.5" height="1.5" fill="#a0a0a0"/><rect x="0" y="15" width="1.5" height="1.5" fill="#a0a0a0"/><rect x="0" y="18" width="1.5" height="1.5" fill="#a0a0a0"/><rect x="0" y="21" width="1.5" height="1.5" fill="#a0a0a0"/></svg>
<svg class="r" style="left:702px;top:78px;" width="22" height="22" viewBox="0 0 22 22"><path d="M2.5 5 L10 13 L17.5 5" fill="none" stroke="#145c88" stroke-width="4.5" stroke-linejoin="miter"/><path d="M2.5 5 L10 13 L17.5 5" fill="none" stroke="#f0f0f0" stroke-width="1.8"/></svg>
<div class="t" style="left:737px;top:82px;font-size:13px;color:#000;">1</div>
<svg class="r" style="left:756px;top:78px;" width="22" height="22" viewBox="0 0 22 22"><path d="M2.5 15 L10 7 L17.5 15" fill="none" stroke="#145c88" stroke-width="4.5"/><path d="M2.5 15 L10 7 L17.5 15" fill="none" stroke="#f0f0f0" stroke-width="1.8"/></svg>
<div class="r" style="left:782px;top:76px;width:1px;height:28px;background:#c8c8c8;"></div>
<div class="r" style="left:783px;top:76px;width:1px;height:28px;background:#ffffff;"></div>
<svg class="r" style="left:787px;top:77px;" width="3" height="24" viewBox="0 0 3 24"><rect x="0" y="0" width="1.5" height="1.5" fill="#a0a0a0"/><rect x="0" y="3" width="1.5" height="1.5" fill="#a0a0a0"/><rect x="0" y="6" width="1.5" height="1.5" fill="#a0a0a0"/><rect x="0" y="9" width="1.5" height="1.5" fill="#a0a0a0"/><rect x="0" y="12" width="1.5" height="1.5" fill="#a0a0a0"/><rect x="0" y="15" width="1.5" height="1.5" fill="#a0a0a0"/><rect x="0" y="18" width="1.5" height="1.5" fill="#a0a0a0"/><rect x="0" y="21" width="1.5" height="1.5" fill="#a0a0a0"/></svg>
<svg class="r" style="left:796px;top:78px;" width="22" height="22" viewBox="0 0 22 22"><path d="M1 15 L13 2 L19 5 L7 19 Z" fill="#fff" stroke="#e6e6e6"/></svg>
<svg class="r" style="left:822px;top:87px;" width="8" height="5" viewBox="0 0 8 5"><path d="M0 0 H7 L3.5 4 Z" fill="#888"/></svg>
<svg class="r" style="left:834px;top:78px;" width="22" height="22" viewBox="0 0 22 22"><path d="M2 20 L19 2 M2 20 L5 17 M19 2 L16 5" stroke="#bbb" stroke-width="1.3"/><path d="M8 18 L12 5 L15 18 M9 13 H14" stroke="#ddd" fill="none"/></svg>
<svg class="r" style="left:861px;top:87px;" width="8" height="5" viewBox="0 0 8 5"><path d="M0 0 H7 L3.5 4 Z" fill="#888"/></svg>
<svg class="r" style="left:873px;top:78px;" width="22" height="22" viewBox="0 0 22 22"><path d="M2 2 H7 M4.5 2 V10 M8 4 H13 L18 9 M18 9 L15 9 M18 9 L18 6" stroke="#c8c8c8" fill="none" stroke-width="1.2"/></svg>
<svg class="r" style="left:900px;top:87px;" width="8" height="5" viewBox="0 0 8 5"><path d="M0 0 H7 L3.5 4 Z" fill="#888"/></svg>
<svg class="r" style="left:912px;top:78px;" width="22" height="22" viewBox="0 0 22 22"><path d="M4 5 Q6 1 10 3 Q14 1 17 4 Q21 7 18 11 Q21 16 16 18 Q11 21 7 18 Q2 19 2 14 Q0 9 4 5 Z" fill="#fff" stroke="#ccc" stroke-width="1.2"/><path d="M7 16 L13 6" stroke="#ccc" stroke-width="2"/></svg>
<svg class="r" style="left:940px;top:78px;" width="22" height="22" viewBox="0 0 22 22"><path d="M1 1 L19 20 M19 1 L1 20" stroke="#bdbdbd" stroke-width="1.2"/></svg>
<svg class="r" style="left:966px;top:87px;" width="8" height="5" viewBox="0 0 8 5"><path d="M0 0 H7 L3.5 4 Z" fill="#888"/></svg>
<svg class="r" style="left:978px;top:78px;" width="22" height="22" viewBox="0 0 22 22"><path d="M1 21 L20 1" stroke="#111" stroke-width="1.2"/><rect x="8.5" y="8.5" width="12" height="12" fill="#fff" stroke="#145c88" stroke-width="1.2"/><path d="M10 11 H19 M10 14 H19 M10 17 H19 M13 10 V20" stroke="#145c88" stroke-width="1"/></svg>
<svg class="r" style="left:1005px;top:87px;" width="8" height="5" viewBox="0 0 8 5"><path d="M0 0 H7 L3.5 4 Z" fill="#1a1a1a"/></svg>
<svg class="r" style="left:1018px;top:78px;" width="22" height="22" viewBox="0 0 22 22"><path d="M2 21 Q3 6 18 2" fill="none" stroke="#bdbdbd" stroke-width="1.2"/></svg>
<svg class="r" style="left:1044px;top:87px;" width="8" height="5" viewBox="0 0 8 5"><path d="M0 0 H7 L3.5 4 Z" fill="#888"/></svg>
<svg class="r" style="left:1057px;top:78px;" width="22" height="22" viewBox="0 0 22 22"><ellipse cx="10" cy="11" rx="8.5" ry="8" fill="none" stroke="#bdbdbd" stroke-width="1.2"/></svg>
<svg class="r" style="left:1083px;top:87px;" width="8" height="5" viewBox="0 0 8 5"><path d="M0 0 H7 L3.5 4 Z" fill="#888"/></svg>
<svg class="r" style="left:1095px;top:78px;" width="22" height="22" viewBox="0 0 22 22"><rect x="1.5" y="1.5" width="19" height="19" fill="none" stroke="#c8c8c8" stroke-width="1.2"/><path d="M7 6 L11 10 M7 6 H10 M7 6 V9" stroke="#ddd" stroke-width="1.5"/></svg>
<svg class="r" style="left:1122px;top:87px;" width="8" height="5" viewBox="0 0 8 5"><path d="M0 0 H7 L3.5 4 Z" fill="#888"/></svg>
<svg class="r" style="left:1134px;top:78px;" width="22" height="22" viewBox="0 0 22 22"><path d="M1 21 Q4 12 8 15 Q12 18 14 10 Q16 4 20 1" fill="none" stroke="#bdbdbd" stroke-width="1.2"/></svg>
<svg class="r" style="left:1161px;top:78px;" width="22" height="22" viewBox="0 0 22 22"><path d="M1 2 H12 V18 H1 Z M6 2 V18 M1 9 H12" fill="none" stroke="#d4d4d4" stroke-width="1.3"/><path d="M9 21 L14 3 L19 21 M11 14 H17" stroke="#d4d4d4" fill="none" stroke-width="1.3"/></svg>
<svg class="r" style="left:1188px;top:78px;" width="22" height="22" viewBox="0 0 22 22"><rect x="3.5" y="1.5" width="16" height="17" fill="#fff" stroke="#d4d4d4"/><rect x="1.5" y="3.5" width="16" height="17" fill="#fff" stroke="#d4d4d4"/><text x="3" y="14" font-size="6" fill="#e4e4e4" font-family="Liberation Sans">CAD</text></svg>
<div class="r" style="left:0px;top:105px;width:159px;height:19px;background:#d9d9d9;box-sizing:border-box;border:1px solid #c8c8c8;"></div>
<div class="t" style="left:4.5px;top:110px;font-size:12px;color:#000;transform:scaleX(0.8981);transform-origin:0 0;">Tool Palette</div>
<svg class="r" style="left:127px;top:108px;" width="14" height="14" viewBox="0 0 14 14"><rect x="2.5" y="5.5" width="6" height="5" fill="none" stroke="#111"/><path d="M4.5 5.5 V3.5 H10.5 V8.5 H8.5" fill="none" stroke="#111"/><rect x="2.5" y="5.5" width="6" height="1.5" fill="#111"/><rect x="4.5" y="3.5" width="6" height="1.5" fill="#111"/></svg>
<svg class="r" style="left:144px;top:108px;" width="14" height="14" viewBox="0 0 14 14"><path d="M3 3 L11 11 M11 3 L3 11" stroke="#111" stroke-width="1.6"/></svg>
<div class="r" style="left:0px;top:126px;width:159px;height:834px;background:#f0f0f0;box-sizing:border-box;border:1px solid #7a8590;border-top-color:#7a8590;"></div>
<div class="r" style="left:2px;top:128px;width:156px;height:25px;background:#cce4f7;box-sizing:border-box;border:1px solid #99d1ff;"></div>
<div class="t" style="left:32.3px;top:137px;font-size:12px;color:#000;transform:scaleX(0.8792);transform-origin:0 0;">Mouse-Orbit Camera</div>
<div class="t" style="left:32.3px;top:162.3px;font-size:12px;color:#000;transform:scaleX(0.8792);transform-origin:0 0;">Mouse-Pan Camera</div>
<div class="t" style="left:32.3px;top:188px;font-size:12px;color:#000;transform:scaleX(0.8792);transform-origin:0 0;">Mouse-Dolly Camera</div>
<div class="t" style="left:32.3px;top:213.8px;font-size:12px;color:#000;transform:scaleX(0.8792);transform-origin:0 0;">Mouse-Tilt Camera</div>
<div class="t" style="left:32.3px;top:239.6px;font-size:12px;color:#000;transform:scaleX(0.8792);transform-origin:0 0;">3D Center Camera on Poin</div>
<div class="t" style="left:32.3px;top:265.4px;font-size:12px;color:#000;transform:scaleX(0.8792);transform-origin:0 0;">3D Focus on Object</div>
<div class="r" style="left:158px;top:126px;width:1px;height:834px;background:#7a8590;"></div>
<div class="r" style="left:159px;top:126px;width:4px;height:834px;background:#f0f0f0;"></div>
<svg class="r" style="left:9px;top:131px;" width="22" height="22" viewBox="0 0 22 22"><path d="M10 3 Q3 8 4 19 M9.5 12 Q7 8 10 3.5 M9.5 12 Q12 6.5 17 6 M9.5 12 Q5.5 14 4.5 19" fill="none" stroke="#111" stroke-width="1.2"/><path d="M7.5 4 L10 0.5 L12.5 4 Z M16 3.5 L20 6 L16 8.5 Z M2 18 L4.5 22 L7 18 Z" fill="#111"/><rect x="11.5" y="12.5" width="9" height="9" fill="#fff" stroke="#111" stroke-width="1.4"/><path d="M13 17 L15 20 L19 14" fill="none" stroke="#1a1acc" stroke-width="1.2"/></svg>
<svg class="r" style="left:9px;top:157px;" width="22" height="22" viewBox="0 0 22 22"><path d="M5 12 V7 Q5 5.5 6.5 5.5 Q8 5.5 8 7 V4 Q8 2.5 9.5 2.5 Q11 2.5 11 4 V4 Q11 2.5 12.5 2.5 Q14 2.5 14 4 V5 Q14 3.5 15.5 3.5 Q17 3.5 17 5 V14 Q17 20 12 20 H10 Q7 20 5 17 L2 12 Q1.5 10 3 10 Q4 10 5 12 Z" fill="#fff" stroke="#111" stroke-width="1.1"/><path d="M8 7 V11 M11 4 V11 M14 5 V11" stroke="#111" stroke-width=".9"/></svg>
<svg class="r" style="left:8px;top:183px;" width="22" height="22" viewBox="0 0 22 22"><path d="M11 2 V18" stroke="#111" stroke-width="1.2"/><path d="M8 5 L11 1 L14 5 Z" fill="#111"/><path d="M11 14 Q6 10 2 11 M11 14 Q16 10 20 11" fill="none" stroke="#111" stroke-width="1.2"/><path d="M1 9 L1 13 L4 11 Z M21 9 L21 13 L18 11 Z" fill="#111"/><circle cx="11" cy="18.5" r="2.5" fill="#111"/></svg>
<svg class="r" style="left:8px;top:209px;" width="22" height="22" viewBox="0 0 22 22"><circle cx="3" cy="3" r="2.2" fill="#111"/><path d="M3 3 Q12 -1 17 5 M3 3 Q-1 9 3 16" fill="none" stroke="#111" stroke-width="1.2"/><path d="M16 2 L19 6 L14 6 Z M1 15 L4 18 L5 14 Z" fill="#111"/><path d="M8 8 L13 14" stroke="#111" stroke-width="1.2"/><path d="M12 15 L17 10 L21 14 L16 19 Z" fill="#fff" stroke="#111" stroke-width="1.2"/></svg>
<svg class="r" style="left:8px;top:235px;" width="22" height="22" viewBox="0 0 22 22"><path d="M1 1 L7 14 L9 7 L16 6 Z" fill="#fff" stroke="#111" stroke-width="1.2"/><path d="M1 1 L9 7 L7 14 Z" fill="#111"/><path d="M10 10 L16 16" stroke="#111" stroke-width="1.2"/><circle cx="18" cy="18.5" r="2.8" fill="#111"/></svg>
<svg class="r" style="left:8px;top:261px;" width="22" height="22" viewBox="0 0 22 22"><path d="M1 1 L7 14 L9 7 L16 6 Z" fill="#fff" stroke="#111" stroke-width="1.2"/><path d="M1 1 L9 7 L7 14 Z" fill="#111"/><path d="M10 10 L13 13" stroke="#111" stroke-width="1.2"/><path d="M11 15 L14 13 H21 V21 H11 Z" fill="#111"/></svg>
<div class="r" style="left:1px;top:942px;width:157px;height:17px;background:#f0f0f0;"></div>
<div class="r" style="left:18px;top:943px;width:106px;height:15px;background:#cdcdcd;"></div>
<svg class="r" style="left:4px;top:944px;" width="10" height="12" viewBox="0 0 10 12"><path d="M7 2 L3 6 L7 10" fill="none" stroke="#4a4a4a" stroke-width="2.1"/></svg>
<svg class="r" style="left:145px;top:944px;" width="10" height="12" viewBox="0 0 10 12"><path d="M3 2 L7 6 L3 10" fill="none" stroke="#4a4a4a" stroke-width="2.1"/></svg>
<svg class="r" style="left:5px;top:965px;" width="22" height="22" viewBox="0 0 22 22"><g transform="translate(10 10)"><circle r="7" fill="#555" stroke="#222"/><rect x="-2" y="-10" width="4" height="4" fill="#555" stroke="#222" stroke-width=".6" transform="rotate(0)"/><rect x="-2" y="-10" width="4" height="4" fill="#555" stroke="#222" stroke-width=".6" transform="rotate(45)"/><rect x="-2" y="-10" width="4" height="4" fill="#555" stroke="#222" stroke-width=".6" transform="rotate(90)"/><rect x="-2" y="-10" width="4" height="4" fill="#555" stroke="#222" stroke-width=".6" transform="rotate(135)"/><rect x="-2" y="-10" width="4" height="4" fill="#555" stroke="#222" stroke-width=".6" transform="rotate(180)"/><rect x="-2" y="-10" width="4" height="4" fill="#555" stroke="#222" stroke-width=".6" transform="rotate(225)"/><rect x="-2" y="-10" width="4" height="4" fill="#555" stroke="#222" stroke-width=".6" transform="rotate(270)"/><rect x="-2" y="-10" width="4" height="4" fill="#555" stroke="#222" stroke-width=".6" transform="rotate(315)"/><circle r="6.3" fill="#555"/><circle r="3" fill="#fff" stroke="#222"/></g><path d="M17 16 L21 20 L17 21 Z" fill="#111"/></svg>
<svg class="r" style="left:4px;top:994px;" width="3" height="24" viewBox="0 0 3 24"><rect x="0" y="0" width="1.5" height="1.5" fill="#a0a0a0"/><rect x="0" y="3" width="1.5" height="1.5" fill="#a0a0a0"/><rect x="0" y="6" width="1.5" height="1.5" fill="#a0a0a0"/><rect x="0" y="9" width="1.5" height="1.5" fill="#a0a0a0"/><rect x="0" y="12" width="1.5" height="1.5" fill="#a0a0a0"/><rect x="0" y="15" width="1.5" height="1.5" fill="#a0a0a0"/><rect x="0" y="18" width="1.5" height="1.5" fill="#a0a0a0"/><rect x="0" y="21" width="1.5" height="1.5" fill="#a0a0a0"/></svg>
<div class="r" style="left:165px;top:106px;width:248px;height:22px;background:#f0f0f0;box-sizing:border-box;border:1px solid #d9d9d9;border-bottom:none;"></div>
<div class="t" style="left:174.3px;top:112px;font-size:12px;color:#000;transform:scaleX(0.8903);transform-origin:0 0;">Residential Design Project - roof: Floor Plan</div>
<svg class="r" style="left:387px;top:111px;" width="12" height="12" viewBox="0 0 12 12"><path d="M2 2 L10 10 M10 2 L2 10" stroke="#111" stroke-width="1.5"/></svg>
<div class="r" style="left:163px;top:127px;width:1726px;height:1px;background:#a9a9a9;"></div>
<div class="r" style="left:413px;top:104px;width:387px;height:24px;background:#ffffff;"></div>
<div class="t" style="left:426px;top:112px;font-size:12px;color:#000;transform:scaleX(0.8969);transform-origin:0 0;">Residential Design Project - roof: Perspective Full Overview - Camera 1</div>
<svg class="r" style="left:773px;top:110px;" width="12" height="12" viewBox="0 0 12 12"><path d="M2 2 L10 10 M10 2 L2 10" stroke="#111" stroke-width="1.5"/></svg>
<div class="r" style="left:163px;top:129px;width:1726px;height:19px;background:#d9d9d9;box-sizing:border-box;border:1px solid #c6c6c6;"></div>
<div class="t" style="left:167px;top:134px;font-size:12px;color:#000;transform:scaleX(0.8956);transform-origin:0 0;">Residential Design Project - roof: Perspective Full Overview - Camera 1</div>
<svg class="r" style="left:1873px;top:132px;" width="14" height="14" viewBox="0 0 14 14"><path d="M3 3 L11 11 M11 3 L3 11" stroke="#111" stroke-width="1.7"/></svg>
<div class="r" style="left:163px;top:150px;width:1726px;height:840px;background:#f0f0f0;box-sizing:border-box;border:1px solid #6f7882;"></div>
<div class="r" style="left:164px;top:151px;width:1708px;height:822px;background:#ffffff;"></div>
<div class="r" style="left:1872px;top:151px;width:16px;height:822px;background:#f0f0f0;"></div>
<div class="r" style="left:1873px;top:525px;width:14px;height:71px;background:#cdcdcd;"></div>
<svg class="r" style="left:1874px;top:154px;" width="12" height="10" viewBox="0 0 12 10"><path d="M2 7 L6 3 L10 7" fill="none" stroke="#4a4a4a" stroke-width="2.1"/></svg>
<svg class="r" style="left:1874px;top:958px;" width="12" height="10" viewBox="0 0 12 10"><path d="M2 3 L6 7 L10 3" fill="none" stroke="#4a4a4a" stroke-width="2.1"/></svg>
<div class="r" style="left:164px;top:973px;width:1708px;height:16px;background:#f0f0f0;"></div>
<div class="r" style="left:942px;top:973px;width:151px;height:15px;background:#cdcdcd;"></div>
<svg class="r" style="left:167px;top:974px;" width="10" height="12" viewBox="0 0 10 12"><path d="M7 2 L3 6 L7 10" fill="none" stroke="#4a4a4a" stroke-width="2.1"/></svg>
<svg class="r" style="left:1857px;top:974px;" width="10" height="12" viewBox="0 0 10 12"><path d="M3 2 L7 6 L3 10" fill="none" stroke="#4a4a4a" stroke-width="2.1"/></svg>
<div class="r" style="left:1889px;top:989px;width:31px;height:1px;background:#b4b4b4;"></div>
<div class="r" style="left:0px;top:990px;width:1920px;height:1px;background:#ffffff;"></div>
<div class="r" style="left:758px;top:1022px;width:1px;height:18px;background:#d0d0d0;"></div>
<div class="r" style="left:1027px;top:1022px;width:1px;height:18px;background:#d0d0d0;"></div>
<div class="r" style="left:1148px;top:1022px;width:1px;height:18px;background:#d0d0d0;"></div>
<div class="r" style="left:1454px;top:1022px;width:1px;height:18px;background:#d0d0d0;"></div>
<div class="r" style="left:1800px;top:1022px;width:1px;height:18px;background:#d0d0d0;"></div>
<div class="t" style="left:763px;top:1024.7px;font-size:12px;color:#000;transform:scaleX(0.9418);transform-origin:0 0;">Done:&nbsp; 2531 surfaces</div>
<div class="t" style="left:1033px;top:1024.7px;font-size:12px;color:#000;transform:scaleX(0.9797);transform-origin:0 0;">All Floors</div>
<div class="t" style="left:1459.6px;top:1024.7px;font-size:12px;color:#000;transform:scaleX(0.9603);transform-origin:0 0;">X: 1138 5/16", Y: -337 1/16", Z: 280 1/4"</div>
<div class="t" style="left:1806.5px;top:1024.7px;font-size:12px;color:#000;transform:scaleX(0.8760);transform-origin:0 0;">1707 x 821</div>
<div class="r" style="left:1889px;top:104px;width:31px;height:886px;background:#f0f0f0;"></div>
<div class="r" style="left:1889px;top:104px;width:1px;height:886px;background:#ffffff;"></div>
<svg class="r" style="left:1894px;top:108px;" width="24" height="3" viewBox="0 0 24 3"><rect x="0" y="0" width="1.6" height="1.6" fill="#a0a0a0"/><rect x="4" y="0" width="1.6" height="1.6" fill="#a0a0a0"/><rect x="8" y="0" width="1.6" height="1.6" fill="#a0a0a0"/><rect x="12" y="0" width="1.6" height="1.6" fill="#a0a0a0"/><rect x="16" y="0" width="1.6" height="1.6" fill="#a0a0a0"/><rect x="20" y="0" width="1.6" height="1.6" fill="#a0a0a0"/></svg>
<svg class="r" style="left:1893px;top:116px;" width="22" height="22" viewBox="0 0 22 22"><rect x="4.5" y="4.5" width="15" height="15" fill="#fff" stroke="#145c88" stroke-width="1.2"/><circle cx="8" cy="8" r="6.5" fill="#fff" stroke="#145c88" stroke-width="1.2"/><path d="M12.5 12.5 L19 19" stroke="#777" stroke-width="2.6" stroke-linecap="round"/></svg>
<svg class="r" style="left:1893px;top:142px;" width="22" height="22" viewBox="0 0 22 22"><circle cx="8" cy="8" r="6.5" fill="#fff" stroke="#145c88" stroke-width="1.2"/><path d="M4.5 8 H11.5 M8 4.5 V11.5" stroke="#145c88" stroke-width="2.5"/><path d="M12.5 12.5 L19 19" stroke="#777" stroke-width="2.6" stroke-linecap="round"/></svg>
<svg class="r" style="left:1893px;top:168px;" width="22" height="22" viewBox="0 0 22 22"><circle cx="8" cy="8" r="6.5" fill="#fff" stroke="#145c88" stroke-width="1.2"/><path d="M4.5 8 H11.5" stroke="#145c88" stroke-width="2.5"/><path d="M12.5 12.5 L19 19" stroke="#777" stroke-width="2.6" stroke-linecap="round"/></svg>
<svg class="r" style="left:1893px;top:194px;" width="22" height="22" viewBox="0 0 22 22"><rect x="5.5" y="1.5" width="15" height="15" fill="#fff" stroke="#145c88" stroke-width="1.2"/><path d="M15 6 L10 11 M10 8 V11 H13" stroke="#111" stroke-width="1.3" fill="none"/><rect x="1.5" y="14.5" width="5" height="5" fill="#fff" stroke="#111"/></svg>
<svg class="r" style="left:1893px;top:220px;" width="22" height="22" viewBox="0 0 22 22"><rect x="1.5" y="1.5" width="19" height="19" fill="#fff" stroke="#145c88" stroke-width="1.3"/><rect x="8.5" y="8.5" width="5" height="5" fill="none" stroke="#145c88"/><path d="M4 4 L7 7 M18 4 L15 7 M4 18 L7 15 M18 18 L15 15 M4 4 H6.5 M4 4 V6.5 M18 4 H15.5 M18 4 V6.5 M4 18 H6.5 M4 18 V15.5 M18 18 H15.5 M18 18 V15.5" stroke="#145c88" stroke-width="1.2"/></svg>
<svg class="r" style="left:1893px;top:246px;" width="22" height="22" viewBox="0 0 22 22"><rect x="1.5" y="1.5" width="19" height="19" fill="#fff" stroke="#145c88" stroke-width="1.3"/><path d="M4 4 L8 8 M18 4 L14 8 M4 18 L8 14 M18 18 L14 14 M4 4 H7 M4 4 V7 M18 4 H15 M18 4 V7 M4 18 H7 M4 18 V15 M18 18 H15 M18 18 V15" stroke="#145c88" stroke-width="1.2"/></svg>
<svg class="r" style="left:1893px;top:272px;" width="22" height="22" viewBox="0 0 22 22"><rect x="1.5" y="2.5" width="19" height="18" fill="#fff" stroke="#145c88" stroke-width="1.3"/><rect x="1" y="1" width="20" height="2" fill="#333"/><path d="M8 15 V9 Q8 8 9 8 Q10 8 10 9 V6 Q10 5 11 5 Q12 5 12 6 V8 Q12 7 13 7 Q14 7 14 8 V9 Q14 8.5 15 8.5 Q16 8.5 16 9.5 V14 Q16 18 12 18 Q9 18 7 15 L5 12 Q5 11 6 11 Z" fill="#fff" stroke="#145c88" stroke-width="1"/></svg>
<svg class="r" style="left:1893px;top:298px;" width="22" height="22" viewBox="0 0 22 22"><path d="M1 9 L8 4 H21 L14 9 Z" fill="#fff" stroke="#ddd"/><path d="M1 13 L8 8 H21 L14 13 Z" fill="#fff" stroke="#ddd"/><path d="M1 17 L8 12 H21 L14 17 Z" fill="#ddd"/></svg>
<svg class="r" style="left:1893px;top:324px;" width="22" height="22" viewBox="0 0 22 22"><path d="M8 2 Q1 9 8 19" fill="none" stroke="#d0d0d0" stroke-width="2"/><path d="M6 1 L11 2 L7 6 Z M6 17 L10 21 L10 16 Z" fill="#d0d0d0"/><path d="M7 9 L11 5 H21 L17 9 Z M7 14 L11 10 H21 L17 14 Z" fill="#fff" stroke="#d0d0d0"/></svg>
<svg class="r" style="left:1893px;top:350px;" width="22" height="22" viewBox="0 0 22 22"><rect x="1.5" y="1.5" width="13" height="15" fill="#fff" stroke="#145c88" stroke-width="1.3"/><rect x="6.5" y="6.5" width="14" height="14" fill="#fff" stroke="#145c88" stroke-width="1.3"/><path d="M10 11 Q13 8 16 11 Q18 15 14 17" fill="none" stroke="#145c88" stroke-width="1.3"/><path d="M9 8 L10 12 L13 10 Z" fill="#145c88"/></svg>
<div class="r" style="left:1890px;top:377px;width:30px;height:1px;background:#d0d0d0;"></div>
<svg class="r" style="left:1894px;top:381px;" width="24" height="3" viewBox="0 0 24 3"><rect x="0" y="0" width="1.6" height="1.6" fill="#a0a0a0"/><rect x="4" y="0" width="1.6" height="1.6" fill="#a0a0a0"/><rect x="8" y="0" width="1.6" height="1.6" fill="#a0a0a0"/><rect x="12" y="0" width="1.6" height="1.6" fill="#a0a0a0"/><rect x="16" y="0" width="1.6" height="1.6" fill="#a0a0a0"/><rect x="20" y="0" width="1.6" height="1.6" fill="#a0a0a0"/></svg>
<div class="r" style="left:1891px;top:386px;width:27px;height:25px;background:#cce4f7;box-sizing:border-box;border:1px solid #99d1ff;"></div>
<svg class="r" style="left:1893px;top:388px;" width="22" height="22" viewBox="0 0 22 22"><path d="M1 10 L10 2 L10 21 H2 Z" fill="#f2d58a" stroke="#145c88" stroke-width="1"/><path d="M10 2 L19 10 V21 H10 Z" fill="#111"/><rect x="4" y="12" width="4" height="4" fill="none" stroke="#145c88"/><rect x="11.5" y="12.5" width="9" height="9" fill="#fff" stroke="#111" stroke-width="1.3"/><path d="M13 17 L15 20 L19 14" fill="none" stroke="#1a1acc" stroke-width="1.2"/></svg>
<svg class="r" style="left:1893px;top:414px;" width="22" height="22" viewBox="0 0 22 22"><rect x="2" y="2" width="18" height="4" fill="#111"/><path d="M2 17.5 H20" stroke="#111" stroke-width="1.2"/><path d="M7 12 Q9 9 11 11 M15 12 Q13 15 11 13" fill="none" stroke="#145c88" stroke-width="1.3"/></svg>
<svg class="r" style="left:1893px;top:440px;" width="22" height="22" viewBox="0 0 22 22"><rect x="2.5" y="1.5" width="16" height="18" fill="none" stroke="#d4d4d4" stroke-width="1.2"/><rect x="4.5" y="3.5" width="12" height="14" fill="#fff" stroke="#d4d4d4"/></svg>
<svg class="r" style="left:1893px;top:466px;" width="22" height="22" viewBox="0 0 22 22"><path d="M3.5 1.5 H13 L18.5 7 V20.5 H3.5 Z" fill="#fff" stroke="#d4d4d4" stroke-width="1.2"/><circle cx="11" cy="13" r="3.5" fill="none" stroke="#d4d4d4"/><path d="M13.5 15.5 L17 19" stroke="#d4d4d4" stroke-width="1.5"/></svg>
<div class="r" style="left:1891px;top:490px;width:27px;height:25px;background:#cce4f7;box-sizing:border-box;border:1px solid #99d1ff;"></div>
<svg class="r" style="left:1893px;top:491px;" width="22" height="22" viewBox="0 0 22 22"><path d="M1 3 H11 M6 3 V14" stroke="#145c88" stroke-width="2"/><path d="M3 20 L19 3" stroke="#111" stroke-width="1.4"/><path d="M17 1.5 L20.5 1.5 L20 5 Z M2 18 L2 21.5 L5.5 21 Z" fill="#111"/><rect x="11.5" y="12.5" width="9" height="9" fill="#fff" stroke="#111" stroke-width="1.3"/><path d="M13 17 L15 20 L19 14" fill="none" stroke="#1a1acc" stroke-width="1.2"/></svg>
<div class="r" style="left:1891px;top:517px;width:27px;height:24px;background:#cce4f7;box-sizing:border-box;border:1px solid #99d1ff;"></div>
<svg class="r" style="left:1893px;top:518px;" width="22" height="22" viewBox="0 0 22 22"><path d="M3 2 L8 7 M8 2 L3 7" stroke="#145c88" stroke-width="1.6"/><path d="M6 9 V21 M10 5 H20" stroke="#145c88" stroke-width="1.3"/><rect x="11.5" y="12.5" width="9" height="9" fill="#fff" stroke="#111" stroke-width="1.3"/><path d="M13 17 L15 20 L19 14" fill="none" stroke="#1a1acc" stroke-width="1.2"/></svg>
<svg class="r" style="left:1893px;top:544px;" width="22" height="22" viewBox="0 0 22 22"><path d="M18 3 Q19 17 3 19" fill="none" stroke="#d4d4d4" stroke-width="1.3"/><path d="M14 5 Q15 13 5 15" fill="none" stroke="#d4d4d4" stroke-width="1.3"/><circle cx="6" cy="6" r="1.3" fill="#d4d4d4"/><circle cx="9" cy="9" r="1.3" fill="#d4d4d4"/></svg>
<svg class="r" style="left:1893px;top:569px;" width="22" height="22" viewBox="0 0 22 22"><path d="M2 6 H20 M2 11 H20 M2 16 H20 M6 2 V21 M11 2 V21 M16 2 V21" stroke="#d4d4d4" stroke-width="1.2"/></svg>
<div class="r" style="left:1891px;top:594px;width:27px;height:25px;background:#cce4f7;box-sizing:border-box;border:1px solid #99d1ff;"></div>
<svg class="r" style="left:1893px;top:595px;" width="22" height="22" viewBox="0 0 22 22"><path d="M1 6 H19 M1 11 H19 M1 16 H12 M5 1 V21 M10 1 V21 M15 1 V11" stroke="#111" stroke-width="1.2"/><circle cx="11" cy="14" r="3" fill="none" stroke="#d23a26" stroke-width="1.3"/><rect x="11.5" y="12.5" width="9" height="9" fill="#fff" stroke="#111" stroke-width="1.3"/><path d="M13 17 L15 20 L19 14" fill="none" stroke="#1a1acc" stroke-width="1.2"/></svg>
<div class="r" style="left:1891px;top:620px;width:27px;height:25px;background:#cce4f7;box-sizing:border-box;border:1px solid #99d1ff;"></div>
<svg class="r" style="left:1893px;top:621px;" width="22" height="22" viewBox="0 0 22 22"><rect x="2.5" y="7.5" width="12" height="12" fill="none" stroke="#111" stroke-width="1.3"/><circle cx="15" cy="6" r="4" fill="none" stroke="#111" stroke-width="1.2"/><circle cx="15" cy="6" r="1.2" fill="#111"/><rect x="1.5" y="6.5" width="3" height="3" fill="#111"/><rect x="1.5" y="18" width="3" height="3" fill="#111"/><rect x="11.5" y="12.5" width="9" height="9" fill="#fff" stroke="#111" stroke-width="1.3"/><path d="M13 17 L15 20 L19 14" fill="none" stroke="#1a1acc" stroke-width="1.2"/></svg>
<div class="r" style="left:1891px;top:646px;width:27px;height:25px;background:#cce4f7;box-sizing:border-box;border:1px solid #99d1ff;"></div>
<svg class="r" style="left:1893px;top:647px;" width="22" height="22" viewBox="0 0 22 22"><path d="M2 1 V21 H20" stroke="#111" stroke-width="1.3" fill="none"/><path d="M4 20 Q10 12 18 3 M7 20 Q12 15 19 9" stroke="#d23a26" stroke-width="1.2" stroke-dasharray="1.5 1.5" fill="none"/><rect x="11.5" y="12.5" width="9" height="9" fill="#fff" stroke="#111" stroke-width="1.3"/><path d="M13 17 L15 20 L19 14" fill="none" stroke="#1a1acc" stroke-width="1.2"/></svg>
<svg class="r" style="left:0;top:0" width="1920" height="1040" viewBox="0 0 1920 1040"><defs><pattern id="sidA" width="50" height="4.8" patternUnits="userSpaceOnUse" patternTransform="skewY(21)"><rect width="50" height="4.8" fill="#5e7985"/><rect y="2.16" width="50" height="1.54" fill="#4e6874" opacity=".25"/><rect y="3.6999999999999997" width="50" height="1.1" fill="#4e6874"/></pattern><pattern id="sidAL" width="50" height="4.8" patternUnits="userSpaceOnUse" patternTransform="skewY(26)"><rect width="50" height="4.8" fill="#7b98a5"/><rect y="2.16" width="50" height="1.54" fill="#65828f" opacity=".25"/><rect y="3.6999999999999997" width="50" height="1.1" fill="#65828f"/></pattern><pattern id="sidB" width="50" height="6.6" patternUnits="userSpaceOnUse" patternTransform="skewY(17)"><rect width="50" height="6.6" fill="#5f7a86"/><rect y="2.9699999999999998" width="50" height="2.33" fill="#4f6975" opacity=".25"/><rect y="5.3" width="50" height="1.3" fill="#4f6975"/></pattern><pattern id="sidBL" width="50" height="6.4" patternUnits="userSpaceOnUse" patternTransform="skewY(21)"><rect width="50" height="6.4" fill="#7c99a6"/><rect y="2.8800000000000003" width="50" height="2.2200000000000006" fill="#64808d" opacity=".25"/><rect y="5.1000000000000005" width="50" height="1.3" fill="#64808d"/></pattern><pattern id="sidR" width="50" height="6.5" patternUnits="userSpaceOnUse" patternTransform="skewY(-28)"><rect width="50" height="6.5" fill="#5f7985"/><rect y="2.9250000000000003" width="50" height="2.2750000000000004" fill="#506975" opacity=".25"/><rect y="5.2" width="50" height="1.3" fill="#506975"/></pattern><pattern id="sidRL" width="50" height="6.5" patternUnits="userSpaceOnUse" patternTransform="skewY(-31)"><rect width="50" height="6.5" fill="#6f8b97"/><rect y="2.9250000000000003" width="50" height="2.2750000000000004" fill="#5c7783" opacity=".25"/><rect y="5.2" width="50" height="1.3" fill="#5c7783"/></pattern><pattern id="sidG" width="50" height="5.5" patternUnits="userSpaceOnUse" patternTransform="skewY(-9)"><rect width="50" height="5.5" fill="#5e7782"/><rect y="2.475" width="50" height="1.7250000000000003" fill="#526975" opacity=".25"/><rect y="4.2" width="50" height="1.3" fill="#526975"/></pattern><pattern id="shA" width="20" height="15.0" patternUnits="userSpaceOnUse" patternTransform="skewY(9)"><rect width="20" height="15.0" fill="#3c3e40"/><rect x="1" y="1" width="7" height="4.5" fill="#474b4e" opacity=".45"/><rect x="16.0" y="8.5" width="7" height="4.5" fill="#474b4e" opacity=".35"/><rect y="6.3" width="20" height="1.2" fill="#2a2c2e"/><rect y="13.8" width="20" height="1.2" fill="#2a2c2e"/><rect x="9.2" y="0" width=".8" height="7.5" fill="#2a2c2e"/><rect x="19.2" y="0" width=".8" height="7.5" fill="#2a2c2e"/><rect x="4.2" y="7.5" width=".8" height="7.5" fill="#2a2c2e"/><rect x="14.2" y="7.5" width=".8" height="7.5" fill="#2a2c2e"/></pattern><pattern id="shU" width="18" height="7.0" patternUnits="userSpaceOnUse" patternTransform="skewY(-4)"><rect width="18" height="7.0" fill="#3c3e41"/><rect x="1" y="1" width="6" height="0.5" fill="#44474a" opacity=".45"/><rect x="14.5" y="4.5" width="6" height="0.5" fill="#44474a" opacity=".35"/><rect y="2.3" width="18" height="1.2" fill="#313336"/><rect y="5.8" width="18" height="1.2" fill="#313336"/><rect x="8.2" y="0" width=".8" height="3.5" fill="#313336"/><rect x="17.2" y="0" width=".8" height="3.5" fill="#313336"/><rect x="3.7" y="3.5" width=".8" height="3.5" fill="#313336"/><rect x="12.7" y="3.5" width=".8" height="3.5" fill="#313336"/></pattern><pattern id="shB" width="32" height="14" patternUnits="userSpaceOnUse" patternTransform="skewY(7)"><rect width="32" height="14" fill="#3c3e40"/><rect x="1" y="1" width="13" height="4" fill="#474b4e" opacity=".45"/><rect x="25.0" y="8" width="13" height="4" fill="#474b4e" opacity=".35"/><rect y="5.8" width="32" height="1.2" fill="#2a2c2e"/><rect y="12.8" width="32" height="1.2" fill="#2a2c2e"/><rect x="15.2" y="0" width=".8" height="7" fill="#2a2c2e"/><rect x="31.2" y="0" width=".8" height="7" fill="#2a2c2e"/><rect x="7.2" y="7" width=".8" height="7" fill="#2a2c2e"/><rect x="23.2" y="7" width=".8" height="7" fill="#2a2c2e"/></pattern><linearGradient id="shadB" gradientUnits="userSpaceOnUse" x1="0" y1="540" x2="0" y2="640"><stop offset="0" stop-color="#2c3c44" stop-opacity="0"/><stop offset="1" stop-color="#2c3c44" stop-opacity=".12"/></linearGradient><linearGradient id="shadA" gradientUnits="userSpaceOnUse" x1="0" y1="500" x2="40" y2="610"><stop offset="0" stop-color="#2c3c44" stop-opacity="0"/><stop offset="1" stop-color="#2c3c44" stop-opacity=".13"/></linearGradient><linearGradient id="conA" gradientUnits="userSpaceOnUse" x1="0" y1="580" x2="60" y2="800"><stop offset="0" stop-color="#9c9d9b"/><stop offset="1" stop-color="#8e8f8d"/></linearGradient><filter id="blur2" x="-20%" y="-20%" width="140%" height="140%"><feGaussianBlur stdDeviation="4"/></filter><filter id="blur1" x="-20%" y="-20%" width="140%" height="140%"><feGaussianBlur stdDeviation="1.5"/></filter><filter id="grain" x="0" y="0" width="100%" height="100%" filterUnits="objectBoundingBox"><feTurbulence type="fractalNoise" baseFrequency="0.45" numOctaves="2" seed="7" result="t"/><feColorMatrix in="t" type="matrix" values="0 0 0 0 0.36  0 0 0 0 0.40  0 0 0 0 0.42  2.0 0 0 0 -0.85" result="c"/><feComposite in="c" in2="SourceAlpha" operator="in"/></filter><filter id="grainC" x="0" y="0" width="100%" height="100%" filterUnits="objectBoundingBox"><feTurbulence type="fractalNoise" baseFrequency="0.08" numOctaves="3" seed="11" result="t"/><feColorMatrix in="t" type="matrix" values="0 0 0 0 0.45  0 0 0 0 0.45  0 0 0 0 0.44  1.6 0 0 0 -0.7" result="c"/><feComposite in="c" in2="SourceAlpha" operator="in"/></filter></defs><polygon points="801,548 913,322 1050,258 1148,318 1178,400 1160,520 892,520 892,665 823,686 812,552" fill="url(#sidG)" /><polygon points="818,620 823,686 848,678" fill="#7490a0" opacity=".75" filter="url(#blur1)"/><polygon points="820.5,684.5 892,661 892,702 976,746 832,812" fill="#939492" /><polygon points="840,680 870,672 880,705 845,740" fill="#858684" opacity=".5" filter="url(#blur2)"/><polygon points="889,704 976,747 919,772" fill="#858684" /><polygon points="832,809 916,770 917,775 832.5,814" fill="#c0c4c0" /><polygon points="916,770 976,744 976,748 917,775" fill="#a3a5a3" /><polygon points="832.5,813.5 976,747.5 976,752 832.5,824" fill="#8b8c8a" /><polygon points="595,468 813,547 823.5,689 615,574" fill="url(#sidA)" /><polygon points="595,468 813,547 819,621 607,526" fill="url(#shadA)" /><polygon points="607,526 819,621 823.5,688 615,573" fill="url(#sidAL)" /><polygon points="614.5,571 823.3,685.5 832.5,812 629,662" fill="url(#conA)" /><polygon points="614.5,571 823.3,685.5 832.5,809.5 629,659.5" fill="#000" filter="url(#grainC)" opacity=".15"/><polygon points="624,660 832.3,809 832.5,814 625,664" fill="#c0c4c0" /><polygon points="625,663.5 832.5,813.5 832.5,824 625.4,668" fill="#8e908d" /><polygon points="566,459 650,318 917,322 806,540" fill="url(#shA)" /><polygon points="650,318.5 766,275 1049,258 917,322.5" fill="url(#shU)" /><polygon points="565,458 650,318 917,322 806,540" fill="#000" filter="url(#grain)" opacity=".25"/><path d="M768 276.5 L1046 259.5" stroke="#222426" stroke-width="2" stroke-dasharray="5 6"/><path d="M652 320 L914 325" stroke="#35383a" stroke-width="4" stroke-dasharray="3 2"/><polygon points="798,536 806,538 806,549 798,549" fill="#b4b4b4" /><polygon points="564,457.5 801,537.5 801.0,540.8 564.6,459.0" fill="#cacaca" /><polygon points="564.56,458.9 801.0,540.58 801.0,544.32 565.24,460.6" fill="#9a9a9a" /><polygon points="565.2,460.5 801.0,544.1 801,548.5 566,462.5" fill="#c3c3c3" /><polygon points="801,548.5 913,322 1050,258 1148,318 1178,400 1168,400 1140,322 1047,267 1040,275 918,331 808,548" fill="#a8a8a8" /><polygon points="1047,266.5 1140.5,321.5 1169,400 1156,400 1130,327 1040,275.5" fill="#b2b2a2" /><polygon points="1203,592 1212,580 1385,408 1462,472 1426,474 1402,633 1183,800 1194,686" fill="url(#sidR)" /><clipPath id="clipR"><polygon points="1203,592 1373,435 1426,472 1402,633 1183,800 1194,686" fill="#000" /></clipPath><mask id="patchR" maskUnits="userSpaceOnUse" x="1150" y="500" width="300" height="350"><g filter="url(#blur2)"><polygon points="1350,590 1420,598 1420,633 1244,760 1290,662" fill="#fff" /></g></mask><g clip-path="url(#clipR)"><g mask="url(#patchR)"><polygon points="1180,560 1430,560 1430,820 1180,820" fill="url(#sidRL)" /></g></g><polygon points="1195,688 1213,770 1200,790 1183,799" fill="url(#sidBL)" opacity=".8"/><polygon points="1184.5,798.5 1402.5,631.5 1396,660 1183,840" fill="#8a8a88" /><polygon points="1184,837 1398,658 1402.3,660.5 1184,845" fill="#c5c9c5" /><polygon points="1184,844.5 1402.3,660 1401.2,669 1184,858" fill="#858684" /><polygon points="883,496 1204,588 1194.5,686 1186,801 889,665" fill="url(#sidB)" /><polygon points="883,496 1204,588 1194.5,686 888,581" fill="url(#shadB)" /><path d="M883.5 505 L888.5 663" stroke="#4a606b" stroke-width="1.5" opacity=".6"/><polygon points="888,580.5 1195,686 1186,800.5 889,664.5" fill="url(#sidBL)" /><polygon points="889,662.5 1186,798.5 1184,840 890,694" fill="#959793" /><polygon points="887,691 1184,837 1184,845 887,696" fill="#c8ccc8" /><polygon points="887,695.5 1184,844.5 1184,858 889,703" fill="#8f918e" /><polygon points="859,489 1040,383 1387,409 1221,582" fill="url(#shB)" /><polygon points="859,489 1040,383 1387,409 1221,582" fill="#000" filter="url(#grain)" opacity=".25"/><path d="M1046 385.5 L1380 410.5" stroke="#232527" stroke-width="2" stroke-dasharray="5 6"/><path d="M861 489 L1040 384.5" stroke="#222426" stroke-width="4"/><path d="M856 490 L1217 578" stroke="#232527" stroke-width="1.5"/><polygon points="855,491 1217,579 1217.0,583.2 855.6,494.9" fill="#cacaca" /><polygon points="855.56,494.64 1217.0,582.92 1217.0,587.68 856.24,499.06" fill="#9a9a9a" /><polygon points="856.2,498.8 1217.0,587.4 1217,593 857,504" fill="#c3c3c3" /><polygon points="1212,580 1385,408 1462,472 1459,480 1383,421 1226,592 1217,592" fill="#a8a8a8" /><polygon points="1373,435 1383,421 1459,480 1426,472" fill="#b2b2a2" /></svg>
</body></html>
